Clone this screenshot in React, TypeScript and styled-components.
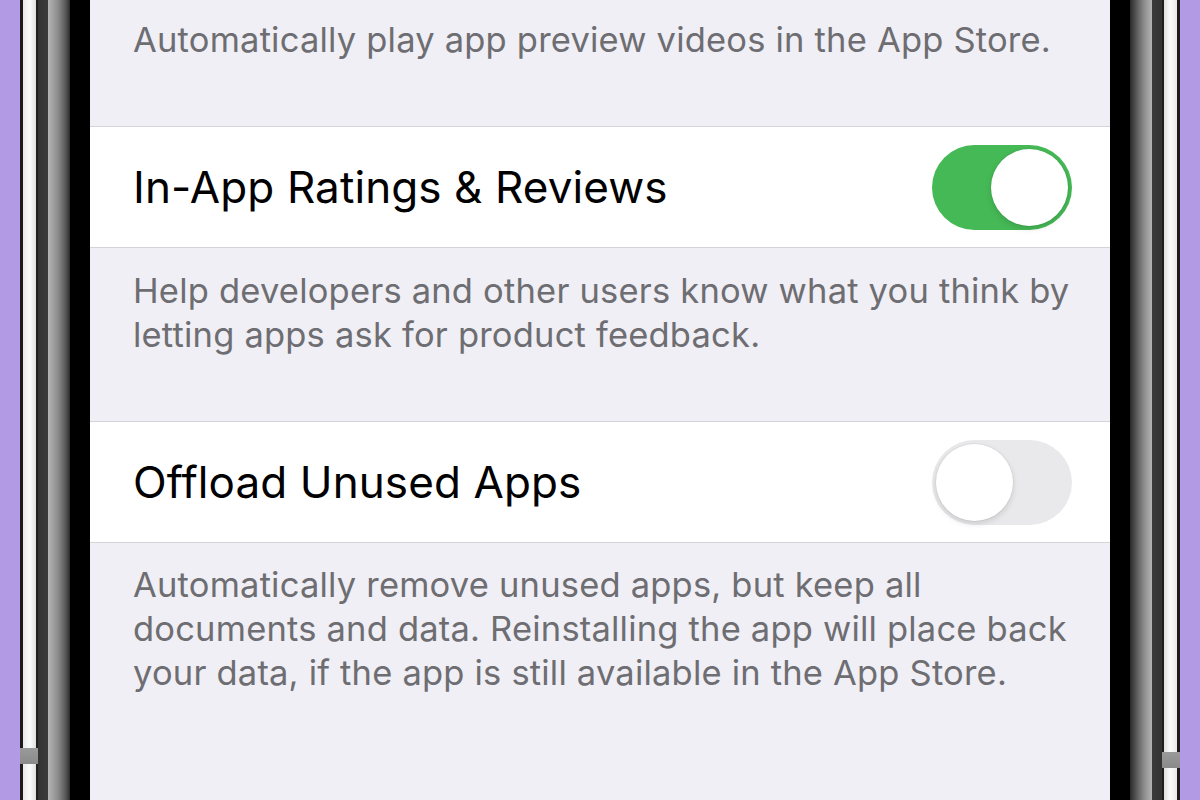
import React from "react";
import styled, { createGlobalStyle } from "styled-components";

const Global = createGlobalStyle`
  html, body { margin: 0; padding: 0; }
  body { background: #b29ae4; font-family: Inter, "Noto Sans", sans-serif; }
  * { box-sizing: border-box; }
`;

const Stage = styled.div`
  width: 1200px;
  height: 800px;
  display: flex;
  overflow: hidden;
  background: #b29ae4;
`;

const Backdrop = styled.div`
  width: 20px;
  flex: none;
  background: #b29ae4;
`;

const Bezel = styled.div<{ $side: "left" | "right" }>`
  position: relative;
  width: 70px;
  flex: none;
  background: ${(p) =>
    p.$side === "left"
      ? `linear-gradient(to right,
          #1c1c1c 0px, #1c1c1c 3px,
          #e9e9e9 3px, #fbfbfb 10px, #dedede 16px,
          #1f1f1f 16px, #1f1f1f 18px,
          #333 18px, #3a3a3a 28px,
          #b4b4b4 28px, #8c8c8c 38px, #555 46px, #2a2a2a 50px,
          #000 50px, #000 70px)`
      : `linear-gradient(to right,
          #000 0px, #000 20px,
          #2a2a2a 20px, #555 26px, #8c8c8c 34px, #b4b4b4 42px,
          #3a3a3a 42px, #333 52px,
          #1f1f1f 52px, #1f1f1f 54px,
          #dedede 54px, #fbfbfb 60px, #e9e9e9 67px,
          #1c1c1c 67px, #1c1c1c 70px)`};
`;

const SideButton = styled.div<{ $side: "left" | "right"; $top: number }>`
  position: absolute;
  top: ${(p) => p.$top}px;
  ${(p) => (p.$side === "left" ? "left: 0;" : "right: 0;")}
  width: 18px;
  height: 16px;
  background: linear-gradient(to bottom, #9a9a9a, #8a8a8a);
`;

const Screen = styled.div`
  flex: 1;
  background: #f0eff5;
  display: flex;
  flex-direction: column;
`;

const Footer = styled.div<{ $top: number; $bottom: number }>`
  padding: ${(p) => p.$top}px 40px ${(p) => p.$bottom}px 43px;
  color: #6d6d72;
  font-size: 34.5px;
  line-height: 44px;
  letter-spacing: 0.2px;
`;

const Cell = styled.div`
  height: 122px;
  background: #ffffff;
  border-top: 1px solid #d4d3d9;
  border-bottom: 1px solid #d4d3d9;
  display: flex;
  align-items: center;
  justify-content: space-between;
  padding: 0 38px 0 43px;
`;

const Title = styled.span`
  font-size: 44px;
  color: #000;
  letter-spacing: 0.1px;
`;

const Track = styled.div<{ $on: boolean }>`
  position: relative;
  width: 140px;
  height: 85px;
  border-radius: 43px;
  background: ${(p) => (p.$on ? "#45b955" : "#e9e9eb")};
  display: flex;
  align-items: center;
  justify-content: ${(p) => (p.$on ? "flex-end" : "flex-start")};
  padding: 0 4px;
`;

const Knob = styled.div`
  width: 77px;
  height: 77px;
  border-radius: 50%;
  background: #fff;
  box-shadow: 0 3px 6px rgba(0, 0, 0, 0.12), 0 0 0 1px rgba(0, 0, 0, 0.04);
`;

const Toggle = ({ on }: { on: boolean }) => (
  <Track $on={on}>
    <Knob />
  </Track>
);

export default function App() {
  return (
    <>
      <Global />
      <Stage>
        <Backdrop />
        <Bezel $side="left">
          <SideButton $side="left" $top={748} />
        </Bezel>
        <Screen>
          <Footer $top={18} $bottom={64}>
            Automatically play app preview videos in the App Store.
          </Footer>
          <Cell>
            <Title>In-App Ratings &amp; Reviews</Title>
            <Toggle on />
          </Cell>
          <Footer $top={21} $bottom={64}>
            Help developers and other users know what you think by letting apps
            ask for product feedback.
          </Footer>
          <Cell>
            <Title>Offload Unused Apps</Title>
            <Toggle on={false} />
          </Cell>
          <Footer $top={20} $bottom={0}>
            Automatically remove unused apps, but keep all documents and data.
            Reinstalling the app will place back your data, if the app is still
            available in the App Store.
          </Footer>
        </Screen>
        <Bezel $side="right">
          <SideButton $side="right" $top={752} />
        </Bezel>
        <Backdrop />
      </Stage>
    </>
  );
}
